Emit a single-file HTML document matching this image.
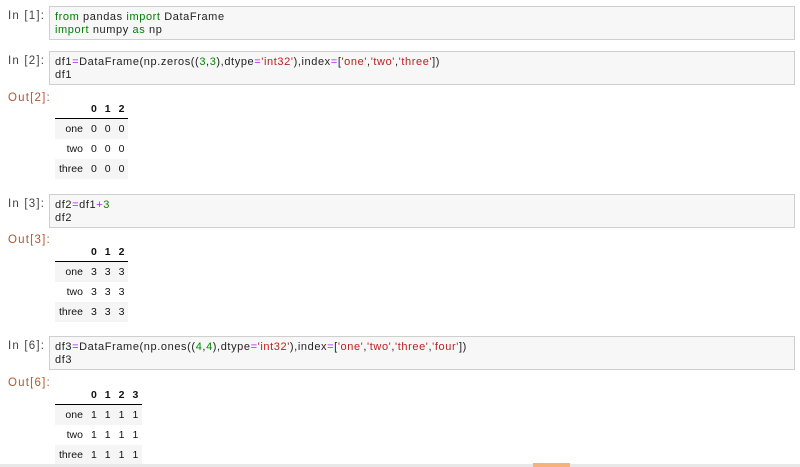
<!DOCTYPE html>
<html><head><meta charset="utf-8"><style>
body{margin:0;width:800px;height:467px;background:#fff;position:relative;overflow:hidden;font-family:"Liberation Sans","Noto Sans CJK KR",sans-serif;}
.p{position:absolute;left:8px;font-family:"Liberation Sans","NanumGothic",sans-serif;font-size:11.5px;letter-spacing:1.2px}
.in{color:#444;}
.out{color:#b2572c;}
.box{position:absolute;left:49px;width:746px;background:#f7f7f7;border:1px solid #cfcfcf;box-sizing:border-box;font-family:"Liberation Sans","NanumGothic",sans-serif;font-size:11px;line-height:12.5px;padding:4px 5px;color:#222;letter-spacing:0.6px}
.k{color:#008000}.s{color:#ba2121}.n{color:#080}.o{color:#a2f}
table{position:absolute;left:55px;border-collapse:collapse;font-size:10.5px;color:#111}
td,th{padding:0 4px;height:20px;text-align:right}
th{font-weight:bold}
tbody th{font-weight:normal}
thead th{border-bottom:1px solid #000;height:19px}
tbody tr:nth-child(odd){background:#f5f5f5}
.bar{position:absolute;left:0;top:464px;width:800px;height:3px;background:#e8e8e8}
.or{position:absolute;left:533px;top:463px;width:37px;height:4px;background:#f7b27a}
</style></head><body>
<div class="p in" style="top:10px">In [1]:</div>
<div class="box" style="top:6px;height:34px"><span class="k">from</span> pandas <span class="k">import</span> DataFrame<br><span class="k">import</span> numpy <span class="k">as</span> np</div>

<div class="p in" style="top:55px">In [2]:</div>
<div class="box" style="top:51px;height:34px">df1<span class="o">=</span>DataFrame(np.zeros((<span class="n">3</span>,<span class="n">3</span>),dtype<span class="o">=</span><span class="s">'int32'</span>),index<span class="o">=</span>[<span class="s">'one'</span>,<span class="s">'two'</span>,<span class="s">'three'</span>])<br>df1</div>
<div class="p out" style="top:92px">Out[2]:</div>
<table style="top:99px"><thead><tr><th></th><th>0</th><th>1</th><th>2</th></tr></thead>
<tbody><tr><th>one</th><td>0</td><td>0</td><td>0</td></tr><tr><th>two</th><td>0</td><td>0</td><td>0</td></tr><tr><th>three</th><td>0</td><td>0</td><td>0</td></tr></tbody></table>

<div class="p in" style="top:198px">In [3]:</div>
<div class="box" style="top:194px;height:34px">df2<span class="o">=</span>df1<span class="o">+</span><span class="n">3</span><br>df2</div>
<div class="p out" style="top:234px">Out[3]:</div>
<table style="top:242px"><thead><tr><th></th><th>0</th><th>1</th><th>2</th></tr></thead>
<tbody><tr><th>one</th><td>3</td><td>3</td><td>3</td></tr><tr><th>two</th><td>3</td><td>3</td><td>3</td></tr><tr><th>three</th><td>3</td><td>3</td><td>3</td></tr></tbody></table>

<div class="p in" style="top:340px">In [6]:</div>
<div class="box" style="top:336px;height:34px">df3<span class="o">=</span>DataFrame(np.ones((<span class="n">4</span>,<span class="n">4</span>),dtype<span class="o">=</span><span class="s">'int32'</span>),index<span class="o">=</span>[<span class="s">'one'</span>,<span class="s">'two'</span>,<span class="s">'three'</span>,<span class="s">'four'</span>])<br>df3</div>
<div class="p out" style="top:377px">Out[6]:</div>
<table style="top:385px"><thead><tr><th></th><th>0</th><th>1</th><th>2</th><th>3</th></tr></thead>
<tbody><tr><th>one</th><td>1</td><td>1</td><td>1</td><td>1</td></tr><tr><th>two</th><td>1</td><td>1</td><td>1</td><td>1</td></tr><tr><th>three</th><td>1</td><td>1</td><td>1</td><td>1</td></tr></tbody></table>
<div class="bar"></div><div class="or"></div>
</body></html>
